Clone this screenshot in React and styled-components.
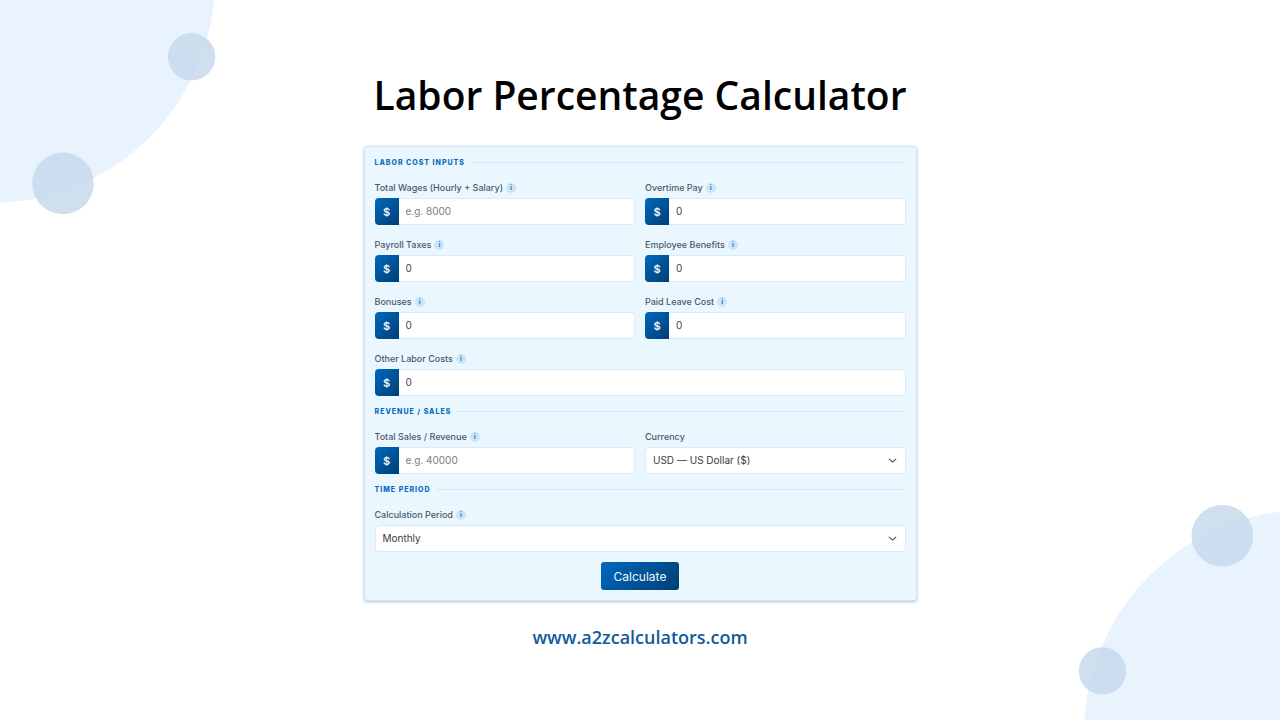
import React from "react";
import styled, { createGlobalStyle } from "styled-components";

const GlobalStyle = createGlobalStyle`
  *, *::before, *::after { box-sizing: border-box; }
  body { margin: 0; background: #ffffff; font-family: Inter, sans-serif; }
`;

const Page = styled.main`
  position: relative;
  min-height: 100vh;
  padding: 71px 24px 48px;
  display: flex;
  flex-direction: column;
  align-items: center;
  overflow: hidden;
`;

const Decoration = styled.svg`
  position: absolute;
  width: 220px;
  height: 220px;
  pointer-events: none;
  ${(p) => (p.$corner === "top" ? "top: 0; left: 0;" : "bottom: 0; right: 0;")}
`;

const Title = styled.h1`
  margin: 0 0 27px;
  font: 600 39px/48px "Open Sans", sans-serif;
  color: #000000;
  text-align: center;
`;

const Card = styled.form`
  width: 100%;
  max-width: 553px;
  padding: 10px;
  display: flex;
  flex-direction: column;
  gap: 10px;
  background: #ebf7ff;
  border: 1px solid #cfe6f6;
  border-radius: 4px;
  box-shadow: 0 1px 3px rgba(0, 50, 90, 0.32);
`;

const Section = styled.section`
  display: flex;
  flex-direction: column;
  gap: 13px;
`;

const SectionTitle = styled.h2`
  margin: 0;
  display: flex;
  align-items: center;
  gap: 5px;
  font-size: 7px;
  line-height: 11px;
  font-weight: 800;
  letter-spacing: 1px;
  text-transform: uppercase;
  color: #0a6cbc;

  &::after {
    content: "";
    flex: 1;
    height: 1px;
    background: #d3e9f8;
  }
`;

const Fields = styled.div`
  display: grid;
  grid-template-columns: 1fr 1fr;
  gap: 13px 10px;
`;

const Field = styled.div`
  display: flex;
  flex-direction: column;
  gap: 4px;
  min-width: 0;
  ${(p) => p.$wide && "grid-column: 1 / -1;"}
`;

const LabelRow = styled.div`
  display: flex;
  align-items: center;
  gap: 3px;
  height: 13px;
`;

const Label = styled.label`
  font-size: 9px;
  line-height: 13px;
  font-weight: 500;
  color: #4a5a6a;
`;

const Info = styled.span`
  width: 10px;
  height: 10px;
  margin-top: 1px;
  border-radius: 50%;
  background: #cde4f7;
  color: #2a78bc;
  font-size: 7px;
  line-height: 10px;
  font-weight: 700;
  text-align: center;
`;

const Control = styled.div`
  position: relative;
  display: flex;
  height: 27px;
`;

const Prefix = styled.span`
  width: 24px;
  flex: none;
  display: flex;
  align-items: center;
  justify-content: center;
  border-radius: 4px 0 0 4px;
  background: linear-gradient(135deg, #0068be, #003f75);
  color: #f2f7fc;
  font-size: 11px;
  font-weight: 600;
`;

const Input = styled.input`
  flex: 1;
  min-width: 0;
  padding: 0 7px 2px;
  border: 1px solid #d6ecfc;
  border-left: 0;
  border-radius: 0 4px 4px 0;
  background: #ffffff;
  font: 400 10px Inter, sans-serif;
  color: #444444;
  outline: none;

  &::placeholder { color: #7c7c7c; opacity: 1; }
`;

const Select = styled.select`
  width: 100%;
  appearance: none;
  padding: 0 24px 1px 7px;
  border: 1px solid #d6ecfc;
  border-radius: 4px;
  background: #ffffff;
  font: 400 10px Inter, sans-serif;
  color: #3a3a3a;
  outline: none;
`;

const Chevron = styled.svg`
  position: absolute;
  right: 9px;
  top: 9px;
  width: 9px;
  height: 9px;
  pointer-events: none;
`;

const Submit = styled.button`
  align-self: center;
  height: 28px;
  padding: 0 13px;
  border: 0;
  border-radius: 3px;
  background: linear-gradient(135deg, #0068be, #003f75);
  color: #f2f7fc;
  font: 400 12px Inter, sans-serif;
  cursor: pointer;
`;

const SiteLink = styled.a`
  margin-top: 23px;
  font: 600 18px/26px "Open Sans", sans-serif;
  color: #125a9c;
  text-decoration: none;
`;

function FieldLabel({ id, text, info = true }) {
  return (
    <LabelRow>
      <Label htmlFor={id}>{text}</Label>
      {info && <Info>i</Info>}
    </LabelRow>
  );
}

function MoneyField({ id, label, wide, ...input }) {
  return (
    <Field $wide={wide}>
      <FieldLabel id={id} text={label} />
      <Control>
        <Prefix>$</Prefix>
        <Input id={id} type="text" inputMode="decimal" {...input} />
      </Control>
    </Field>
  );
}

function SelectField({ id, label, wide, info, options }) {
  return (
    <Field $wide={wide}>
      <FieldLabel id={id} text={label} info={info} />
      <Control>
        <Select id={id}>
          {options.map((option) => (
            <option key={option}>{option}</option>
          ))}
        </Select>
        <Chevron viewBox="0 0 9 9" fill="none" aria-hidden="true">
          <path d="M1.2 3.2L4.5 6.2L7.8 3.2" stroke="#4a5058" strokeWidth="1.1" strokeLinecap="round" strokeLinejoin="round" />
        </Chevron>
      </Control>
    </Field>
  );
}

export default function App() {
  return (
    <Page>
      <GlobalStyle />
      <Decoration $corner="top" viewBox="0 0 220 220" aria-hidden="true">
        <circle cx="-9" cy="-21" r="224" fill="#e8f3fd" />
        <g fill="#c3d6e9" fillOpacity="0.78">
          <circle cx="191.6" cy="56.8" r="23.7" />
          <circle cx="63" cy="183.4" r="30.8" />
        </g>
      </Decoration>
      <Decoration $corner="bottom" viewBox="0 0 220 220" aria-hidden="true">
        <circle cx="248" cy="234" r="224" fill="#e8f3fd" />
        <g fill="#c3d6e9" fillOpacity="0.78">
          <circle cx="162.3" cy="35.8" r="30.8" />
          <circle cx="42.5" cy="170.9" r="23.7" />
        </g>
      </Decoration>

      <Title>Labor Percentage Calculator</Title>
      <Card onSubmit={(event) => event.preventDefault()}>
        <Section>
          <SectionTitle>Labor Cost Inputs</SectionTitle>
          <Fields>
            <MoneyField id="wages" label="Total Wages (Hourly + Salary)" placeholder="e.g. 8000" />
            <MoneyField id="overtime" label="Overtime Pay" defaultValue="0" />
            <MoneyField id="taxes" label="Payroll Taxes" defaultValue="0" />
            <MoneyField id="benefits" label="Employee Benefits" defaultValue="0" />
            <MoneyField id="bonuses" label="Bonuses" defaultValue="0" />
            <MoneyField id="leave" label="Paid Leave Cost" defaultValue="0" />
            <MoneyField id="other" label="Other Labor Costs" defaultValue="0" wide />
          </Fields>
        </Section>
        <Section>
          <SectionTitle>Revenue / Sales</SectionTitle>
          <Fields>
            <MoneyField id="sales" label="Total Sales / Revenue" placeholder="e.g. 40000" />
            <SelectField id="currency" label="Currency" info={false} options={["USD — US Dollar ($)"]} />
          </Fields>
        </Section>
        <Section>
          <SectionTitle>Time Period</SectionTitle>
          <Fields>
            <SelectField id="period" label="Calculation Period" wide options={["Monthly"]} />
          </Fields>
        </Section>
        <Submit type="submit">Calculate</Submit>
      </Card>
      <SiteLink href="#">www.a2zcalculators.com</SiteLink>
    </Page>
  );
}
